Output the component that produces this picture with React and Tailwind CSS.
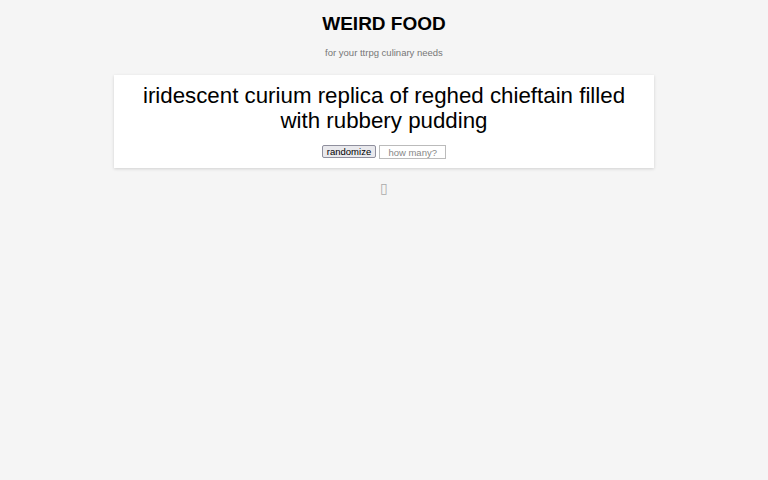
import React from 'react';

const App = () => {
  return (
    <div className="min-h-screen bg-[#f5f5f5] font-['Liberation_Sans',Arial,sans-serif] text-black">
      <div className="flex flex-col items-center">
        <h1 className="mt-[13px] text-[19px] leading-[22px] font-bold">WEIRD FOOD</h1>
        <p className="mt-[12px] text-[9.5px] leading-[12px] text-[#777]">for your ttrpg culinary needs</p>

        <div className="mt-[16px] w-[540px] bg-white shadow-[0_1px_3px_rgba(0,0,0,0.15)] px-[20px] pt-[8px] pb-[9px] text-center">
          <div className="text-[22.3px] leading-[25px]">
            iridescent curium replica of reghed chieftain filled with rubbery pudding
          </div>
          <div className="mt-[12px] flex justify-center gap-[3px]">
            <button className="h-[13px] px-[4px] text-[9.5px] leading-[11px] bg-[#e9e9ed] border border-[#8f8f9d] rounded-[2px]">
              randomize
            </button>
            <input
              placeholder="how many?"
              className="h-[14px] w-[67px] text-[9.5px] leading-[12px] text-center border border-[#bbb] bg-white placeholder:text-[#888] outline-none"
            />
          </div>
        </div>

        <div className="mt-[12px] text-[14px] leading-[16px] text-[#aaa]">▯</div>
      </div>
    </div>
  );
};

export default App;
